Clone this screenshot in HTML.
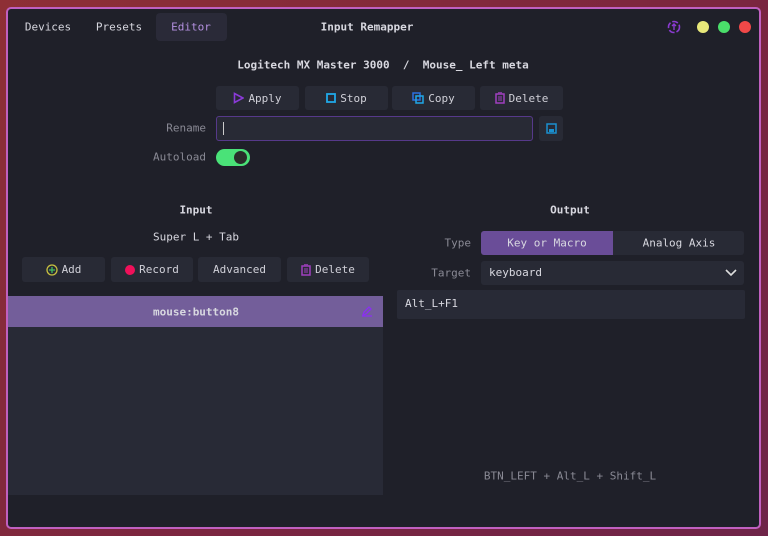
<!DOCTYPE html>
<html><head><meta charset="utf-8"><style>
*{box-sizing:border-box;margin:0;padding:0}
body{width:768px;height:536px;background:linear-gradient(135deg,#8e2f35,#7a2540 60%,#6e2448);position:relative;overflow:hidden;font-family:"DejaVu Sans Mono","Liberation Mono",monospace;font-size:11px;color:#d8d8e0}
.win{position:absolute;left:6px;top:7px;width:755px;height:522px;border:2px solid #c060c0;border-radius:5px;background:#1f2029}
.a{position:absolute}
.t{position:absolute;transform:translate(-50%,-50%);white-space:nowrap}
.btn{position:absolute;background:#282a35;border-radius:3px;display:flex;align-items:center;justify-content:center;gap:4px;color:#d0d0d8}
.lbl{position:absolute;color:#8a8a95;text-align:right;transform:translateY(-50%)}
.dot{position:absolute;width:12px;height:12px;border-radius:50%}
</style></head><body>
<div class="win"></div>
<div class="a" style="left:156px;top:13px;width:71px;height:28px;background:#2a2a38;border-radius:4px"></div>
<div class="t" style="left:48px;top:27px">Devices</div>
<div class="t" style="left:119px;top:27px">Presets</div>
<div class="t" style="left:191px;top:27px;color:#b490e0">Editor</div>
<div class="t" style="left:367px;top:27px;font-weight:bold">Input Remapper</div>
<svg class="a" style="left:667px;top:20px" width="14" height="14" viewBox="0 0 14 14"><circle cx="7" cy="7" r="5.5" fill="none" stroke="#8a3ad0" stroke-width="1.6" stroke-dasharray="6 2"/><path d="M7 4v6M5 6l2-2 2 2" stroke="#8a3ad0" stroke-width="1.4" fill="none"/></svg>
<div class="dot" style="left:697px;top:21px;background:#e8e87a"></div>
<div class="dot" style="left:718px;top:21px;background:#4ade6a"></div>
<div class="dot" style="left:739px;top:21px;background:#f04848"></div>
<div class="t" style="left:383px;top:65px;font-weight:bold;white-space:pre">Logitech MX Master 3000  /  Mouse_ Left meta</div>
<div class="btn" style="left:216px;top:86px;width:83px;height:24px"><svg width="11" height="12"><path d="M1.5 1.5L10 6L1.5 10.5Z" fill="none" stroke="#8a3ad8" stroke-width="1.6"/></svg>Apply</div>
<div class="btn" style="left:305px;top:86px;width:83px;height:24px"><svg width="10" height="10"><rect x="1" y="1" width="8" height="8" fill="none" stroke="#20a8e8" stroke-width="1.8"/></svg>Stop</div>
<div class="btn" style="left:392px;top:86px;width:83px;height:24px"><svg width="12" height="12"><rect x="1" y="1" width="7" height="7" fill="none" stroke="#2a70e0" stroke-width="1.5"/><rect x="4" y="4" width="7" height="7" fill="none" stroke="#20a8e8" stroke-width="1.5"/></svg>Copy</div>
<div class="btn" style="left:480px;top:86px;width:83px;height:24px"><svg width="10" height="12"><rect x="1" y="2" width="8" height="9" fill="none" stroke="#a040c0" stroke-width="1.5"/><path d="M3 0.8h4M4 4v5M6 4v5" stroke="#a040c0"/></svg>Delete</div>
<div class="lbl" style="left:120px;width:86px;top:128px">Rename</div>
<div class="a" style="left:216px;top:116px;width:317px;height:25px;background:#282a35;border:1px solid #56398a;border-radius:3px"><div class="a" style="left:6px;top:5px;width:1px;height:13px;background:#ccc"></div></div>
<div class="btn" style="left:539px;top:116px;width:24px;height:25px"><svg width="11" height="11"><rect x="1" y="1" width="9" height="9" fill="none" stroke="#1a90d0" stroke-width="1.5"/><rect x="3" y="6" width="5" height="3" fill="#1a90d0"/></svg></div>
<div class="lbl" style="left:120px;width:86px;top:157px">Autoload</div>
<div class="a" style="left:216px;top:149px;width:34px;height:17px;background:#4ae278;border-radius:9px"><div class="a" style="left:18px;top:2px;width:13px;height:13px;border-radius:50%;background:#2a2d2a"></div></div>
<div class="t" style="left:196px;top:210px;font-weight:bold">Input</div>
<div class="t" style="left:196px;top:237px">Super L + Tab</div>
<div class="btn" style="left:22px;top:257px;width:83px;height:25px"><svg width="12" height="12"><circle cx="6" cy="6" r="5" fill="none" stroke="#c8c040" stroke-width="1.3"/><path d="M6 3v6M3 6h6" stroke="#40c060" stroke-width="1.3"/></svg>Add</div>
<div class="btn" style="left:111px;top:257px;width:82px;height:25px"><span style="width:10px;height:10px;border-radius:50%;background:#f0105a;display:inline-block"></span>Record</div>
<div class="btn" style="left:198px;top:257px;width:83px;height:25px">Advanced</div>
<div class="btn" style="left:287px;top:257px;width:82px;height:25px"><svg width="10" height="12"><rect x="1" y="2" width="8" height="9" fill="none" stroke="#a040c0" stroke-width="1.5"/><path d="M3 0.8h4M4 4v5M6 4v5" stroke="#a040c0"/></svg>Delete</div>
<div class="a" style="left:8px;top:296px;width:375px;height:199px;background:#282a36"></div>
<div class="a" style="left:8px;top:296px;width:375px;height:31px;background:#735e9a"></div>
<div class="t" style="left:196px;top:312px;font-weight:bold">mouse:button8</div>
<svg class="a" style="left:361px;top:305px" width="12" height="12"><path d="M2 10l1-3 5-5 2 2-5 5z M1 11h10" fill="none" stroke="#8a30f0" stroke-width="1.3"/></svg>
<div class="t" style="left:570px;top:210px;font-weight:bold">Output</div>
<div class="lbl" style="left:400px;width:71px;top:243px">Type</div>
<div class="a" style="left:481px;top:231px;width:263px;height:24px;background:#282a35;border-radius:3px"></div>
<div class="a" style="left:481px;top:231px;width:132px;height:24px;background:#6a4d98;border-radius:3px 0 0 3px"></div>
<div class="t" style="left:547px;top:243px">Key or Macro</div>
<div class="t" style="left:679px;top:243px">Analog Axis</div>
<div class="lbl" style="left:400px;width:71px;top:273px">Target</div>
<div class="a" style="left:481px;top:261px;width:263px;height:24px;background:#282a35;border-radius:3px"></div>
<div class="a" style="left:489px;top:266px">keyboard</div>
<svg class="a" style="left:725px;top:268px" width="12" height="10"><path d="M1 2l5 5 5-5" fill="none" stroke="#ddd" stroke-width="1.6"/></svg>
<div class="a" style="left:397px;top:290px;width:348px;height:29px;background:#282a36;border-radius:2px"></div>
<div class="a" style="left:405px;top:297px">Alt_L+F1</div>
<div class="t" style="left:570px;top:476px;color:#8a8a95">BTN_LEFT + Alt_L + Shift_L</div>
</body></html>
